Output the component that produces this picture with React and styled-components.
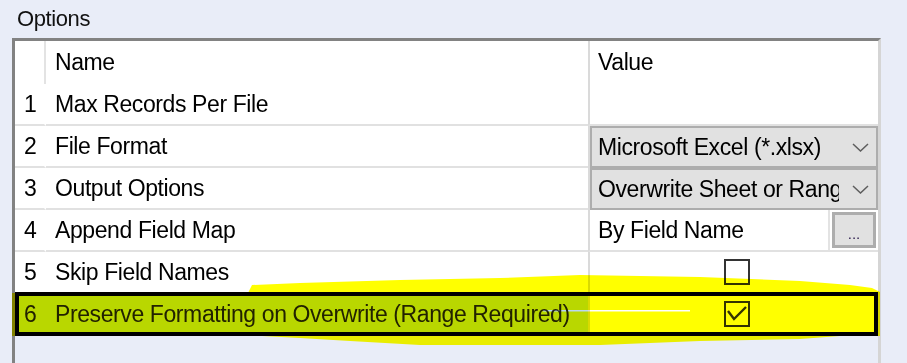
import styled, { createGlobalStyle } from "styled-components";

const GlobalStyle = createGlobalStyle`
  html, body {
    margin: 0;
    padding: 0;
  }
  body {
    background: #e9edf8;
    font-family: "Liberation Sans", Arial, sans-serif;
    overflow: hidden;
  }
`;

const options = [
  { n: 1, name: "Max Records Per File", type: "empty" },
  { n: 2, name: "File Format", type: "select", value: "Microsoft Excel (*.xlsx)" },
  { n: 3, name: "Output Options", type: "select", value: "Overwrite Sheet or Range" },
  { n: 4, name: "Append Field Map", type: "picker", value: "By Field Name" },
  { n: 5, name: "Skip Field Names", type: "check", checked: false },
  {
    n: 6,
    name: "Preserve Formatting on Overwrite (Range Required)",
    type: "check",
    checked: true,
    selected: true,
  },
];

function Chevron() {
  return (
    <svg width="17" height="9" viewBox="0 0 17 9">
      <polyline points="1,1 8.5,8 16,1" fill="none" stroke="#5e5e5e" strokeWidth="1.5" />
    </svg>
  );
}

function CheckMark() {
  return (
    <svg width="22" height="22" viewBox="0 0 22 22">
      <polyline points="2,8 8,16 20,4" fill="none" stroke="#333" strokeWidth="2.4" />
    </svg>
  );
}

function ValueContent({ item }) {
  if (item.type === "select") {
    return (
      <Dropdown>
        <DropText>{item.value}</DropText>
        <Chevron />
      </Dropdown>
    );
  }
  if (item.type === "picker") {
    return (
      <>
        <CellText>{item.value}</CellText>
        <ButtonSlot>
          <DotsButton>...</DotsButton>
        </ButtonSlot>
      </>
    );
  }
  if (item.type === "check") {
    return <CheckBox>{item.checked ? <CheckMark /> : null}</CheckBox>;
  }
  return null;
}

export default function App() {
  return (
    <Page>
      <GlobalStyle />
      <Label>Options</Label>
      <Panel>
        <Row $header>
          <NumCell $header />
          <NameCell $header>Name</NameCell>
          <ValueCell $header>Value</ValueCell>
        </Row>
        {options.map((item) => (
          <Row key={item.n} $selected={item.selected}>
            <NumCell $selected={item.selected}>{item.n}</NumCell>
            <NameCell $selected={item.selected}>{item.name}</NameCell>
            <ValueCell
              $kind={item.type}
              $selected={item.selected}
            >
              <ValueContent item={item} />
            </ValueCell>
          </Row>
        ))}
      </Panel>
      <Highlighter viewBox="0 0 907 363" width="907" height="363">
        <path
          fillRule="evenodd"
          fill="#ffff00"
          d="M12,293 L248,293 L252,285 L300,283 L400,280 L500,278 L580,275 L700,277 L800,281 L850,285 L872,288 L880,292 L880,336 L840,336 L800,339 L700,341 L600,345 L420,345 L350,341 L300,338 L262,336 L12,336 Z M543,310 L690,310 L690,311.5 L543,311.5 Z"
        />
      </Highlighter>
    </Page>
  );
}

const Page = styled.div`
  position: relative;
  width: 907px;
  height: 363px;
  background: #e9edf8;
  overflow: hidden;
`;

const Label = styled.div`
  height: 38px;
  box-sizing: border-box;
  padding: 7px 0 0 17px;
  font-size: 22px;
  line-height: 24px;
  letter-spacing: -0.4px;
  color: #111;
`;

const Panel = styled.div`
  margin-left: 12px;
  width: 869px;
  height: 325px;
  box-sizing: border-box;
  border-top: 3px solid #828282;
  border-left: 3px solid #828282;
  border-right: 3px solid #d5d5d5;
`;

const Row = styled.div`
  position: relative;
  display: grid;
  grid-template-columns: 31px 542px 1fr;
  height: ${(p) => (p.$header ? 43 : p.$selected ? 44 : 42)}px;
  margin-top: ${(p) => (p.$selected ? -2 : 0)}px;
  background: #fff;
  font-size: 23px;
  letter-spacing: -0.4px;
  color: ${(p) => (p.$selected ? "#222" : "#000")};
  outline: ${(p) => (p.$selected ? "4px solid #000" : "none")};
  outline-offset: -4px;
`;

const Cell = styled.div`
  display: flex;
  align-items: center;
  box-sizing: border-box;
  min-width: 0;
  white-space: nowrap;
  border-bottom: ${(p) =>
    p.$header || p.$selected ? "none" : "2px solid #e1e1e1"};
`;

const NumCell = styled(Cell)`
  padding-left: 9px;
  border-right: 2px solid ${(p) => (p.$header ? "#e3e3e3" : "transparent")};
  background: ${(p) => (p.$selected ? "#b9d7f2" : "#fff")};
`;

const NameCell = styled(Cell)`
  padding-left: 9px;
  background: ${(p) => (p.$selected ? "#b9d7f2" : "#fff")};
`;

const ValueCell = styled(Cell)`
  border-left: 2px solid #dadada;
  padding-left: ${(p) => (p.$kind === "select" ? 0 : 8)}px;
  justify-content: ${(p) => (p.$kind === "check" ? "center" : "flex-start")};
  ${(p) => p.$kind === "select" && "border-bottom: none; align-items: stretch;"}
  ${(p) => p.$kind === "picker" && "align-items: stretch;"}
`;

const Dropdown = styled.div`
  flex: 1;
  display: flex;
  align-items: center;
  min-width: 0;
  box-sizing: border-box;
  padding-left: 6px;
  background: #e1e1e1;
  border: 2px solid #adadad;
  svg {
    flex: none;
    margin: 0 7px 0 13px;
  }
`;

const DropText = styled.span`
  flex: 1;
  min-width: 0;
  overflow: hidden;
  white-space: nowrap;
`;

const CellText = styled.span`
  flex: 1;
  display: flex;
  align-items: center;
`;

const ButtonSlot = styled.div`
  display: flex;
  align-items: center;
  padding: 0 2px;
  border-left: 2px solid #e3e3e3;
`;

const DotsButton = styled.div`
  width: 44px;
  height: 36px;
  box-sizing: border-box;
  border: 3px solid #adadad;
  background: #e1e1e1;
  display: flex;
  align-items: center;
  justify-content: center;
  padding-top: 6px;
  font-size: 15px;
  letter-spacing: 0;
  color: #302050;
`;

const CheckBox = styled.div`
  width: 26px;
  height: 26px;
  box-sizing: border-box;
  margin-right: 2px;
  border: 2px solid #333;
  background: #fff;
  svg {
    display: block;
  }
`;

const Highlighter = styled.svg`
  position: absolute;
  top: 0;
  left: 0;
  pointer-events: none;
  mix-blend-mode: multiply;
`;
